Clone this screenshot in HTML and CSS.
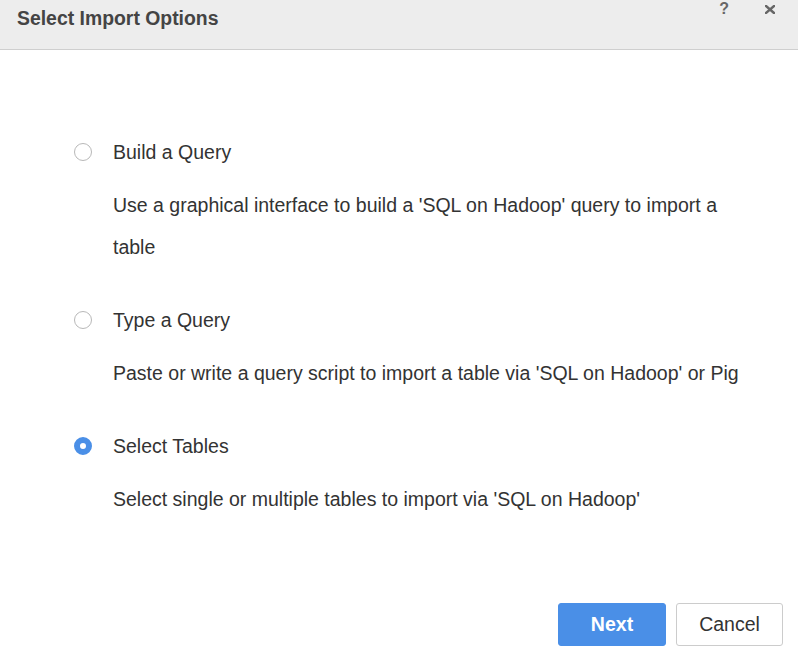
FILE: index.html
```html
<!DOCTYPE html>
<html lang="en">
<head>
  <meta charset="UTF-8">
  <title>Select Import Options</title>
  <link rel="stylesheet" href="styles.css">
</head>
<body>
<div class="dialog">
  <div class="header">
    <div class="title">Select Import Options</div>
    <div class="tools">
      <span class="help">?</span>
      <svg class="close" width="10" height="9" viewBox="0 0 10 9">
        <path d="M1 1 L9 8 M9 1 L1 8" stroke="#666" stroke-width="2.4" stroke-linecap="square"/>
      </svg>
    </div>
  </div>

  <div class="options">
    <div class="option">
      <div class="row">
        <span class="radio"></span>
        <span class="label">Build a Query</span>
      </div>
      <div class="desc">Use a graphical interface to build a 'SQL on Hadoop' query to import a table</div>
    </div>
    <div class="option">
      <div class="row">
        <span class="radio"></span>
        <span class="label">Type a Query</span>
      </div>
      <div class="desc">Paste or write a query script to import a table via 'SQL on Hadoop' or Pig</div>
    </div>
    <div class="option">
      <div class="row">
        <span class="radio checked"></span>
        <span class="label">Select Tables</span>
      </div>
      <div class="desc">Select single or multiple tables to import via 'SQL on Hadoop'</div>
    </div>
  </div>

  <div class="footer">
    <button class="btn primary">Next</button>
    <button class="btn">Cancel</button>
  </div>
</div>
</body>
</html>
```

FILE: styles.css
```css
body {
  margin: 0;
  background: #fff;
  font-family: "Liberation Sans", Arial, sans-serif;
  color: #333;
}

.dialog {
  height: 654px;
  display: flex;
  flex-direction: column;
}

.header {
  height: 49px;
  background: #ededed;
  border-bottom: 1px solid #cfcfcf;
  display: flex;
  justify-content: space-between;
  padding-left: 17px;
  padding-right: 23px;
}

.title {
  font-size: 19.4px;
  font-weight: bold;
  color: #444;
  line-height: 20px;
  padding-top: 8px;
}

.tools {
  display: flex;
  align-items: flex-start;
  gap: 36px;
  color: #666;
  font-weight: bold;
}

.help {
  font-size: 16px;
  line-height: 16px;
  padding-top: 1px;
}

.close {
  margin-top: 5px;
}

.options {
  padding-top: 81px;
  padding-left: 74px;
  flex: 1;
}

.option {
  margin-bottom: 31px;
}

.row {
  display: flex;
  align-items: center;
  height: 42px;
  gap: 21px;
}

.radio {
  width: 16px;
  height: 16px;
  border: 1px solid #b8b8b8;
  border-radius: 50%;
  box-sizing: content-box;
  background: #fff;
}

.radio.checked {
  width: 6px;
  height: 6px;
  border: 6px solid #4a8fe7;
  background: #fff;
}

.label {
  font-size: 19.5px;
}

.desc {
  margin-top: 11px;
  margin-left: 39px;
  font-size: 19.5px;
  line-height: 42px;
  max-width: 632px;
}

.footer {
  display: flex;
  justify-content: flex-end;
  gap: 10px;
  padding-right: 15px;
  padding-bottom: 8px;
}

.btn {
  width: 107px;
  height: 43px;
  border: 1px solid #ccc;
  border-radius: 3px;
  background: #fff;
  color: #333;
  font-family: "Liberation Sans", Arial, sans-serif;
  font-size: 19.5px;
}

.btn.primary {
  width: 108px;
  background: #4a8fe7;
  border-color: #4a8fe7;
  color: #fff;
  font-weight: bold;
}
```
